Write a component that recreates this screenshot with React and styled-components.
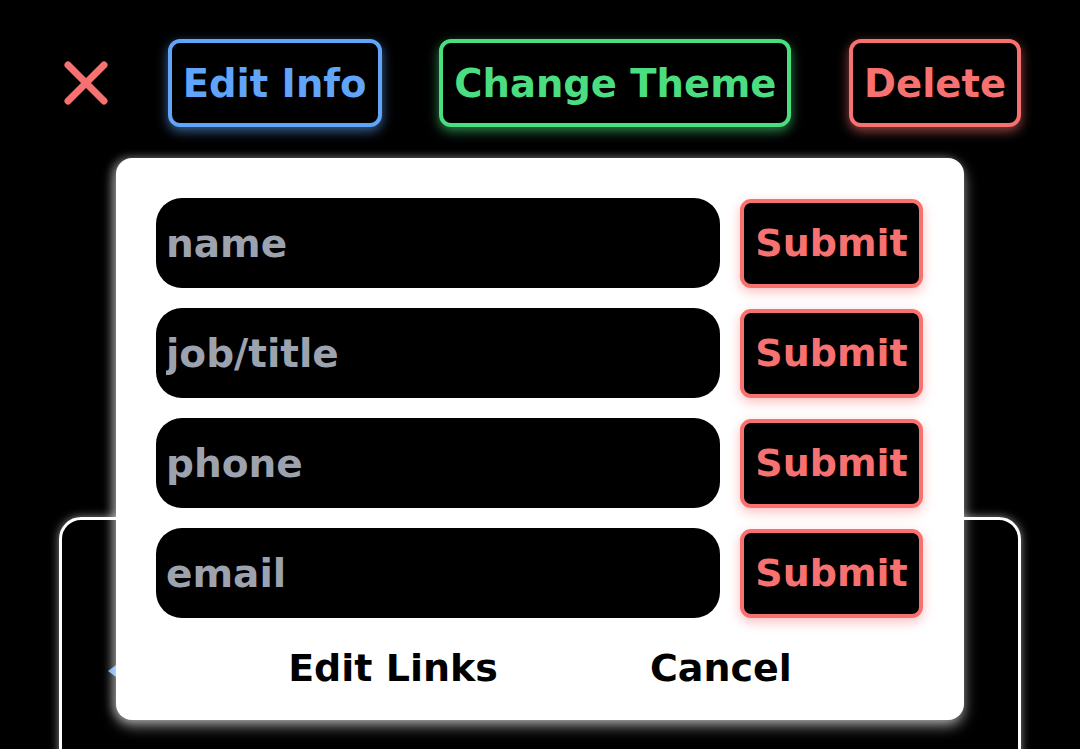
import React from "react";
import styled, { createGlobalStyle } from "styled-components";

const Global = createGlobalStyle`
  html, body { margin: 0; padding: 0; background: #000; }
  body { font-family: "DejaVu Sans", "Liberation Sans", sans-serif; overflow: hidden; }
  * { box-sizing: border-box; }
`;

const colors = { red: "#f87171", blue: "#60a5fa", green: "#4ade80" };

const Page = styled.div`
  position: relative;
  width: 1080px;
  height: 749px;
  background: #000;
  overflow: hidden;
`;

const TopBar = styled.div`
  display: flex;
  align-items: center;
  justify-content: space-between;
  padding: 39px 59px 0 62px;
`;

const CloseButton = styled.button`
  width: 48px;
  height: 48px;
  padding: 0;
  border: none;
  background: transparent;
  display: flex;
  align-items: center;
  justify-content: center;
`;

const OutlineButton = styled.button`
  height: 88px;
  padding: 0 11px;
  background: #000;
  border: 4px solid ${(p) => p.$color};
  border-radius: 12px;
  color: ${(p) => p.$color};
  font-family: inherit;
  font-weight: 700;
  font-size: 38.5px;
  box-shadow: 0 4px 12px ${(p) => p.$color}99;
  white-space: nowrap;
`;

const Card = styled.div`
  margin: 390px 59px 0 59px;
  height: 300px;
  border: 3px solid #fff;
  border-radius: 22px;
  box-shadow: 0 0 10px rgba(255, 255, 255, 0.55);
  position: relative;
`;

const ArrowTip = styled.span`
  position: absolute;
  left: 46px;
  top: 145px;
  width: 0;
  height: 0;
  border-top: 6px solid transparent;
  border-bottom: 6px solid transparent;
  border-right: 8px solid ${colors.blue};
`;

const SideMark = styled.span`
  position: absolute;
  right: 55px;
  top: 100px;
  width: 4px;
  height: 22px;
  background: #bfdbfe;
`;

const Modal = styled.div`
  position: absolute;
  left: 116px;
  top: 158px;
  width: 848px;
  height: 562px;
  background: #fff;
  border-radius: 16px;
  padding: 40px 41px 0 40px;
  box-shadow: 0 6px 14px rgba(255, 255, 255, 0.55), -4px 0 10px rgba(255, 255, 255, 0.35);
  display: flex;
  flex-direction: column;
`;

const Fields = styled.div`
  display: flex;
  flex-direction: column;
  gap: 20px;
`;

const FieldRow = styled.form`
  display: flex;
  align-items: center;
  gap: 20px;
  margin: 0;
`;

const Input = styled.input`
  width: 564px;
  height: 90px;
  border: none;
  outline: none;
  background: #000;
  border-radius: 26px;
  padding: 0 10px;
  color: #fff;
  font-family: inherit;
  font-weight: 700;
  font-size: 39px;
  &::placeholder { color: #9ca3af; opacity: 1; }
`;

const SubmitButton = styled.button`
  width: 183px;
  height: 89px;
  background: #000;
  border: 4px solid ${colors.red};
  border-radius: 11px;
  color: ${colors.red};
  font-family: inherit;
  font-weight: 700;
  font-size: 38px;
  padding: 0;
  box-shadow: 0 4px 12px rgba(248, 113, 113, 0.45);
`;

const Footer = styled.div`
  flex: 1;
  display: flex;
  align-items: center;
  justify-content: center;
  gap: 152px;
  padding-bottom: 2px;
  margin-left: -40px;
  margin-right: -41px;
`;

const TextButton = styled.button`
  background: transparent;
  border: none;
  padding: 0;
  color: #000;
  font-family: inherit;
  font-weight: 700;
  font-size: 38px;
`;

const fields = ["name", "job/title", "phone", "email"];

export default function App() {
  return (
    <Page>
      <Global />
      <TopBar>
        <CloseButton aria-label="close">
          <svg width="48" height="48" viewBox="0 0 48 48">
            <path d="M6 6 L42 42 M42 6 L6 42" stroke={colors.red} strokeWidth="7" strokeLinecap="round" />
          </svg>
        </CloseButton>
        <OutlineButton $color={colors.blue}>Edit Info</OutlineButton>
        <OutlineButton $color={colors.green}>Change Theme</OutlineButton>
        <OutlineButton $color={colors.red}>Delete</OutlineButton>
      </TopBar>
      <Card>
        <ArrowTip />
        <SideMark />
      </Card>
      <Modal>
        <Fields>
          {fields.map((f) => (
            <FieldRow key={f} onSubmit={(e) => e.preventDefault()}>
              <Input placeholder={f} />
              <SubmitButton type="submit">Submit</SubmitButton>
            </FieldRow>
          ))}
        </Fields>
        <Footer>
          <TextButton>Edit Links</TextButton>
          <TextButton>Cancel</TextButton>
        </Footer>
      </Modal>
    </Page>
  );
}
